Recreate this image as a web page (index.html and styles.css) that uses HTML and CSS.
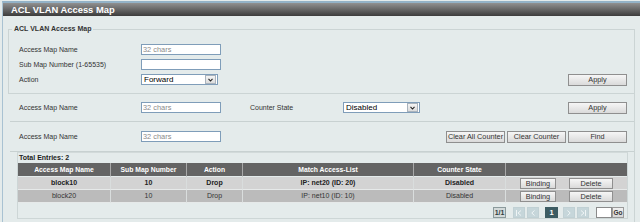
FILE: index.html
```html
<!DOCTYPE html>
<html>
<head>
<meta charset="utf-8">
<link rel="stylesheet" href="styles.css">
</head>
<body>
<div class="frame">
  <div class="titlebar">ACL VLAN Access Map</div>
  <div class="content">
    <fieldset class="group">
      <legend class="group-title">ACL VLAN Access Map</legend>
      <div class="form-grid">
        <span class="lbl">Access Map Name</span>
        <input class="txt" type="text" placeholder="32 chars">
        <span></span>
        <span class="lbl">Sub Map Number (1-65535)</span>
        <input class="txt" type="text">
        <span></span>
        <span class="lbl">Action</span>
        <div class="select"><span>Forward</span><span class="arrow"><svg width="5" height="4" viewBox="0 0 5 4"><polyline points="0.5,0.8 2.5,3 4.5,0.8" fill="none" stroke="#222" stroke-width="1.1"/></svg></span></div>
        <button class="btn">Apply</button>
      </div>
    </fieldset>
    <div class="lower">
      <div class="section s2">
        <span class="lbl">Access Map Name</span>
        <input class="txt" type="text" placeholder="32 chars">
        <span class="lbl lbl-cs">Counter State</span>
        <div class="select"><span>Disabled</span><span class="arrow"><svg width="5" height="4" viewBox="0 0 5 4"><polyline points="0.5,0.8 2.5,3 4.5,0.8" fill="none" stroke="#222" stroke-width="1.1"/></svg></span></div>
        <span class="spacer"></span>
        <button class="btn">Apply</button>
      </div>
      <div class="section s3">
        <span class="lbl">Access Map Name</span>
        <input class="txt" type="text" placeholder="32 chars">
        <span class="spacer"></span>
        <div class="btn-group">
          <button class="btn">Clear All Counter</button>
          <button class="btn">Clear Counter</button>
          <button class="btn">Find</button>
        </div>
      </div>
      <div class="table-box">
        <div class="total">Total Entries: 2</div>
        <table class="grid">
          <colgroup>
            <col class="c1"><col class="c2"><col class="c3"><col class="c4"><col class="c5"><col class="c6">
          </colgroup>
          <thead>
            <tr><th>Access Map Name</th><th>Sub Map Number</th><th>Action</th><th>Match Access-List</th><th>Counter State</th><th></th></tr>
          </thead>
          <tbody>
            <tr class="r1"><td>block10</td><td>10</td><td>Drop</td><td>IP: net20 (ID: 20)</td><td>Disabled</td><td><div class="acts"><button class="btn b-bind">Binding</button><button class="btn b-del">Delete</button></div></td></tr>
            <tr class="r2"><td>block20</td><td>10</td><td>Drop</td><td>IP: net10 (ID: 10)</td><td>Disabled</td><td><div class="acts"><button class="btn b-bind">Binding</button><button class="btn b-del">Delete</button></div></td></tr>
          </tbody>
        </table>
        <div class="pager">
          <span class="pg pg-total">1/1</span>
          <span class="pg pg-nav pg-first"><svg width="6" height="6" viewBox="0 0 6 6"><line x1="0.5" y1="0" x2="0.5" y2="6" stroke="#eef4f5" stroke-width="1"/><polyline points="5,0.5 2,3 5,5.5" fill="none" stroke="#eef4f5" stroke-width="1"/></svg></span>
          <span class="pg pg-nav pg-prev"><svg width="4" height="6" viewBox="0 0 4 6"><polyline points="3.5,0.5 0.8,3 3.5,5.5" fill="none" stroke="#eef4f5" stroke-width="1"/></svg></span>
          <span class="pg pg-cur">1</span>
          <span class="pg pg-nav pg-next"><svg width="4" height="6" viewBox="0 0 4 6"><polyline points="0.5,0.5 3.2,3 0.5,5.5" fill="none" stroke="#eef4f5" stroke-width="1"/></svg></span>
          <span class="pg pg-nav pg-last"><svg width="6" height="6" viewBox="0 0 6 6"><polyline points="1,0.5 4,3 1,5.5" fill="none" stroke="#eef4f5" stroke-width="1"/><line x1="5.5" y1="0" x2="5.5" y2="6" stroke="#eef4f5" stroke-width="1"/></svg></span>
          <input class="pg-input" type="text">
          <button class="pg-go">Go</button>
        </div>
      </div>
    </div>
  </div>
</div>
</body>
</html>
```
FILE: styles.css
```css
html, body {
  margin: 0;
  padding: 0;
}
body {
  background: #e4ebeb;
  font-family: "Liberation Sans", Arial, sans-serif;
  font-size: 7px;
  color: #333;
  width: 640px;
  height: 222px;
  overflow: hidden;
}
.frame {
  margin: 1px 0 0 2px;
  border-top: 2px solid #93b2c7;
  border-left: 1px solid #a9c2d2;
  height: 219px;
  display: flex;
  flex-direction: column;
}
.titlebar {
  height: 13px;
  line-height: 13px;
  padding-left: 8px;
  background: linear-gradient(#909090, #3c3c3c);
  color: #fff;
  font-weight: bold;
  font-size: 9.4px;
  flex: none;
}
.content {
  flex: 1;
  display: flex;
  flex-direction: column;
}
.group {
  margin: 8px 5px 0 5px;
  padding: 7px 7px 6px 10px;
  border: 1px solid #cbd4d4;
  min-width: 0;
}
.group-title {
  margin-left: -7px;
  padding: 0 2px;
  line-height: 10px;
  font-weight: bold;
  font-size: 7px;
  color: #333;
}
.form-grid {
  display: grid;
  grid-template-columns: 122px 1fr 59px;
  grid-template-rows: 16px 15px 15px;
  align-items: center;
}
.lbl {
  width: 122px;
  flex: none;
  color: #333;
}
.txt {
  box-sizing: border-box;
  width: 80px;
  height: 11px;
  margin: 0;
  padding: 0 1px;
  border: 1px solid #7f9db9;
  background: #fff;
  font-family: "Liberation Sans", Arial, sans-serif;
  font-size: 7.4px;
  color: #222;
  outline: none;
}
.txt::placeholder {
  color: #8a8a8a;
}
.select {
  box-sizing: border-box;
  width: 77px;
  height: 11px;
  border: 1px solid #7f9db9;
  background: #fff;
  display: flex;
  align-items: center;
  padding-left: 2px;
  font-size: 8px;
  color: #000;
}
.arrow {
  margin-left: auto;
  margin-right: 1px;
  box-sizing: border-box;
  width: 11px;
  height: 9px;
  border: 1px solid #a9b3bd;
  background: linear-gradient(#f4f4f4, #dcdcdc);
  display: flex;
  align-items: center;
  justify-content: center;
}
.btn {
  box-sizing: border-box;
  width: 59px;
  height: 12px;
  margin: 0;
  padding: 0;
  border: 1px solid #8f8f8f;
  background: linear-gradient(#f6f6f6, #dadada);
  font-family: "Liberation Sans", Arial, sans-serif;
  font-size: 7.3px;
  color: #333;
  line-height: 10px;
}
.lower {
  flex: 1;
  margin-right: 5px;
  border-right: 1px solid #cbd4d4;
  display: flex;
  flex-direction: column;
}
.section {
  margin-left: 7px;
  padding: 0 7px 0 9px;
  border-bottom: 1px solid #c8d1d1;
  display: flex;
  align-items: center;
}
.s2 {
  height: 27px;
}
.s3 {
  height: 29px;
}
.lbl-cs {
  width: 93px;
  margin-left: 29px;
}
.spacer {
  flex: 1;
}
.btn-group {
  display: flex;
  gap: 2px;
}
.table-box {
  margin: 0 6px 0 14px;
  border: 1px solid #cdd6d6;
  border-top-color: #d2dada;
  height: 67px;
  box-sizing: border-box;
}
.total {
  height: 10px;
  line-height: 10px;
  padding-left: 1px;
  font-weight: bold;
  color: #222;
}
.grid {
  width: 609px;
  table-layout: fixed;
  border-collapse: separate;
  border-spacing: 0;
}
.c1 { width: 93px; }
.c2 { width: 76px; }
.c3 { width: 56px; }
.c4 { width: 171px; }
.c5 { width: 92px; }
.c6 { width: 121px; }
.grid th,
.grid td {
  padding: 0;
  text-align: center;
  border-right: 1px solid #d9dddd;
  border-bottom: 1px solid #e6e9e9;
  white-space: nowrap;
  overflow: hidden;
}
.grid th:last-child,
.grid td:last-child {
  border-right: none;
}
.grid th {
  background: #646464;
  color: #fff;
  font-weight: bold;
  font-size: 6.8px;
  height: 13px;
  line-height: 13px;
  border-right-color: #a8a8a8;
  border-bottom: 1px solid #e4ebeb;
}
.grid td {
  height: 12px;
  line-height: 12px;
  font-size: 7px;
}
.r1 td {
  background: #d3d3d3;
  color: #222;
  font-weight: bold;
}
.r2 td {
  background: #bbbbbb;
  color: #333;
}
.acts {
  display: flex;
  justify-content: center;
  align-items: center;
  gap: 13px;
  height: 12px;
  font-weight: normal;
}
.b-bind {
  width: 36px;
  height: 11px;
}
.b-del {
  width: 44px;
  height: 11px;
}
.pager {
  display: flex;
  justify-content: flex-end;
  align-items: center;
  height: 11px;
  margin-top: 4px;
  padding-right: 3px;
}
.pg {
  box-sizing: border-box;
  height: 11px;
  display: flex;
  align-items: center;
  justify-content: center;
  font-weight: bold;
  font-size: 7px;
}
.pg-total {
  width: 13px;
  border: 1px solid #8b9a9c;
  background: #d3dada;
  color: #2f3d40;
}
.pg-nav {
  width: 12px;
  background: #c6d6da;
  border: 1px solid #c0d0d4;
}
.pg-first { margin-left: 7px; }
.pg-prev { margin-left: 2px; }
.pg-cur {
  width: 13px;
  margin-left: 6px;
  background: #3d5c63;
  color: #fff;
  font-size: 7.5px;
}
.pg-next { margin-left: 5px; }
.pg-last { margin-left: 2px; }
.pg-input {
  box-sizing: border-box;
  width: 16px;
  height: 11px;
  margin: 0 0 0 7px;
  padding: 0;
  border: 1px solid #8a8a8a;
  background: #fff;
  outline: none;
}
.pg-go {
  box-sizing: border-box;
  width: 12px;
  height: 11px;
  margin: 0;
  padding: 0;
  border: 1px solid #9a9a9a;
  background: linear-gradient(#f0f0f0, #d6d6d6);
  font-family: "Liberation Sans", Arial, sans-serif;
  font-size: 6.5px;
  font-weight: bold;
  color: #333;
}
```
